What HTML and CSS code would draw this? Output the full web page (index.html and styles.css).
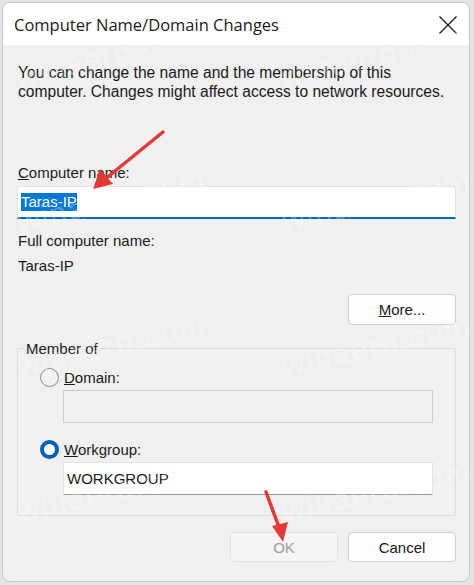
FILE: index.html
```html
<!DOCTYPE html>
<html lang="en">
<head>
    <meta charset="UTF-8">
    <title>Computer Name/Domain Changes</title>
    <link rel="stylesheet" href="styles.css">
</head>
<body>

<div class="dialog">
    <div class="titlebar">
        <span class="title">Computer Name/Domain Changes</span>
        <svg class="close" width="22" height="22" viewBox="0 0 22 22">
            <path d="M2.5 2.5 L19.5 19.5 M19.5 2.5 L2.5 19.5" stroke="#1b1b1b" stroke-width="1.3" fill="none"/>
        </svg>
    </div>

    <div class="content">
        <p class="intro">You can change the name and the membership of this computer. Changes might affect access to network resources.</p>

        <p class="label label-first"><u>C</u>omputer name:</p>
        <div class="textbox focused"><span class="selected">Taras-IP</span></div>

        <p class="label label-full">Full computer name:</p>
        <p class="label label-value">Taras-IP</p>

        <div class="more-row">
            <button class="btn"><u>M</u>ore...</button>
        </div>

        <fieldset class="group">
            <legend>Member of</legend>
            <div class="radio-row">
                <span class="radio"></span>
                <span><u>D</u>omain:</span>
            </div>
            <div class="textbox disabled"></div>
            <div class="radio-row radio-row-second">
                <span class="radio checked"></span>
                <span><u>W</u>orkgroup:</span>
            </div>
            <div class="textbox">WORKGROUP</div>
        </fieldset>

        <div class="actions">
            <button class="btn btn-disabled">OK</button>
            <button class="btn">Cancel</button>
        </div>
    </div>
</div>

<div class="watermarks">
    <span class="wm wm1">winaero.com</span>
    <span class="wm wm2">winaero.com</span>
    <span class="wm wm3">winaero.com</span>
    <span class="wm wm4">winaero.com</span>
    <span class="wm wm5">winaero.com</span>
    <span class="wm wm6">winaero.com</span>
    <span class="wm wm7">winaero.com</span>
    <span class="wm wm8">winaero.com</span>
</div>

<svg class="arrows" width="474" height="585" viewBox="0 0 474 585">
    <g stroke="#e53935" stroke-width="3.5" stroke-linecap="round" fill="none">
        <path d="M163 132 L104 180"/>
        <path d="M266 492 L280 530"/>
    </g>
    <g fill="#e53935">
        <path d="M93 189 L100 169 L113 184 Z"/>
        <path d="M283 542 L272 526 L288 522 Z"/>
    </g>
</svg>

</body>
</html>
```

FILE: styles.css
```css
body {
    margin: 0;
    width: 474px;
    height: 585px;
    background-color: #e4e4e4;
    font-family: 'Liberation Sans', Arial, sans-serif;
    font-size: 15px;
    color: #1a1a1a;
    position: relative;
    overflow: hidden;
}
.dialog {
    margin: 2px 0 0 2px;
    width: 466px;
    height: 578px;
    background-color: #f0f0f0;
    border: 1px solid #c9c9c9;
    border-radius: 8px;
    overflow: hidden;
}
.titlebar {
    height: 42px;
    background-color: #ffffff;
    display: flex;
    align-items: center;
    justify-content: space-between;
    padding: 0 10px 0 11px;
}
.title {
    font-family: 'Open Sans', 'Noto Sans', sans-serif;
    font-size: 16.5px;
    color: #1b1b1b;
}
.close {
    margin-top: 2px;
}
.content {
    padding: 18px 13px 0 14px;
}
.intro {
    margin: 0 0 0 1px;
    line-height: 19px;
    font-size: 15.6px;
    width: 434px;
}
.label {
    margin: 0 0 0 1px;
    line-height: 19px;
}
.label-first {
    margin-top: 62px;
}
.label-full {
    margin-top: 12px;
}
.label-value {
    margin-top: 6px;
}
.textbox {
    box-sizing: border-box;
    height: 33px;
    background-color: #ffffff;
    border: 1px solid #e2e2e2;
    border-bottom-color: #9a9a9a;
    padding: 0 3px;
    display: flex;
    align-items: center;
    font-size: 15px;
}
.content > .textbox {
    margin-top: 4px;
    height: 33px;
}
.focused {
    border-bottom: 2px solid #0067c0;
}
.selected {
    background-color: #0078d7;
    color: #ffffff;
    line-height: 18px;
}
.disabled {
    background-color: #f0f0f0;
    border: 1px solid #cdcdcd;
}
.more-row {
    margin-top: 19px;
    display: flex;
    justify-content: flex-end;
}
.btn {
    box-sizing: border-box;
    width: 108px;
    height: 31px;
    background-color: #fdfdfd;
    border: 1px solid #d0d0d0;
    border-radius: 4px;
    font-family: 'Liberation Sans', Arial, sans-serif;
    font-size: 15px;
    color: #1a1a1a;
    padding: 0;
}
.btn-disabled {
    background-color: #f5f5f5;
    border-color: #e3e3e3;
    color: #9d9d9d;
}
.group {
    margin: 14px 0 0 0;
    border: 1px solid #dcdcdc;
    border-radius: 2px;
    padding: 9px 22px 20px 6px;
}
.group legend {
    padding: 0 2px;
    margin-left: 0;
    line-height: 19px;
}
.group .radio-row {
    margin-left: 16px;
}
.group .textbox {
    margin-left: 39px;
    margin-top: 3px;
}
.radio-row {
    display: flex;
    align-items: center;
    gap: 5px;
    height: 20px;
}
.group .radio-row-second {
    margin-top: 16px;
}
.radio {
    box-sizing: border-box;
    width: 19px;
    height: 19px;
    border-radius: 50%;
    border: 1px solid #8a8a8a;
    background-color: #f2f2f2;
}
.checked {
    border: 4.5px solid #005fb8;
    background-color: #ffffff;
}
.actions {
    margin-top: 16px;
    display: flex;
    justify-content: flex-end;
    gap: 10px;
}
.actions .btn {
    height: 30px;
}
.watermarks {
    position: absolute;
    inset: 0;
    pointer-events: none;
}
.wm {
    position: absolute;
    font-family: 'Liberation Sans', Arial, sans-serif;
    font-size: 30px;
    letter-spacing: 2px;
    color: rgba(255, 255, 255, 0.3);
    -webkit-text-stroke: 0.6px rgba(0, 0, 0, 0.04);
    transform: rotate(-13deg);
    transform-origin: left bottom;
}
.wm1 { left: 20px; top: 60px; }
.wm2 { left: 285px; top: 60px; }
.wm3 { left: 22px; top: 205px; }
.wm4 { left: 287px; top: 205px; }
.wm5 { left: 22px; top: 350px; }
.wm6 { left: 287px; top: 350px; }
.wm7 { left: 22px; top: 495px; }
.wm8 { left: 287px; top: 495px; }
.arrows {
    position: absolute;
    left: 0;
    top: 0;
    pointer-events: none;
}
```
